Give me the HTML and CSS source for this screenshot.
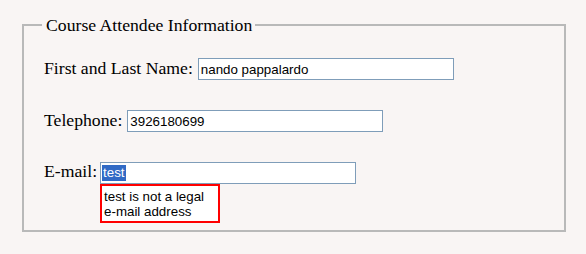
FILE: index.html
```html
<!DOCTYPE html>
<html lang="en">
<head>
<meta charset="utf-8">
<title>Course Attendee Information</title>
<link rel="stylesheet" href="styles.css">
</head>
<body>
<form class="page">
  <fieldset class="group">
    <legend class="group-title">Course Attendee Information</legend>
    <div class="row">
      <label class="label" for="name">First and Last Name:</label>
      <input class="field" id="name" type="text" value="nando pappalardo">
    </div>
    <div class="row">
      <label class="label" for="tel">Telephone:</label>
      <input class="field" id="tel" type="text" value="3926180699">
    </div>
    <div class="row row-last">
      <span class="label">E-mail:</span>
      <div class="field-col">
        <div class="field fake-field"><span class="selected">test</span></div>
        <div class="error">test is not a legal e-mail address</div>
      </div>
    </div>
  </fieldset>
</form>
</body>
</html>
```
FILE: styles.css
```css
html, body {
  margin: 0;
  padding: 0;
  background: #f9f5f4;
}
body {
  font-family: "Liberation Serif", "Times New Roman", serif;
  font-size: 17.7px;
  color: #000;
}
.page {
  padding: 15px 20px 0 22px;
  margin: 0;
}
.group {
  margin: 0;
  width: 544px;
  box-sizing: border-box;
  border: 2px solid #b9b9b9;
  padding: 23px 20px 7px 20px;
}
.group-title {
  padding: 0 3px 0 4px;
  margin-left: -2px;
  font-size: 17.7px;
  line-height: 20px;
}
.row {
  display: flex;
  align-items: baseline;
  gap: 5px;
  margin-bottom: 30px;
}
.row-last {
  margin-bottom: 0;
  gap: 3px;
}
.label {
  font-size: 17.7px;
  line-height: 18px;
}
.field {
  box-sizing: border-box;
  width: 256px;
  height: 22px;
  margin: 0;
  border: 1px solid #7f9db9;
  background: #fff;
  padding: 1px 2px;
  font-family: "Liberation Sans", Arial, sans-serif;
  font-size: 13.33px;
  line-height: 16px;
  color: #000;
  outline: none;
}
.field-col {
  display: flex;
  flex-direction: column;
}
.fake-field {
  display: flex;
  align-items: center;
  padding: 1px 1px 1px 1px;
}
.selected {
  background: #316ac5;
  color: #fff;
  line-height: 16px;
  padding: 0 1px;
}
.error {
  box-sizing: border-box;
  width: 120px;
  border: 2px solid #f00;
  background: #fff;
  padding: 3px 2px 2px 2px;
  font-family: "Liberation Sans", Arial, sans-serif;
  font-size: 13.33px;
  line-height: 15px;
  color: #000;
}
```
